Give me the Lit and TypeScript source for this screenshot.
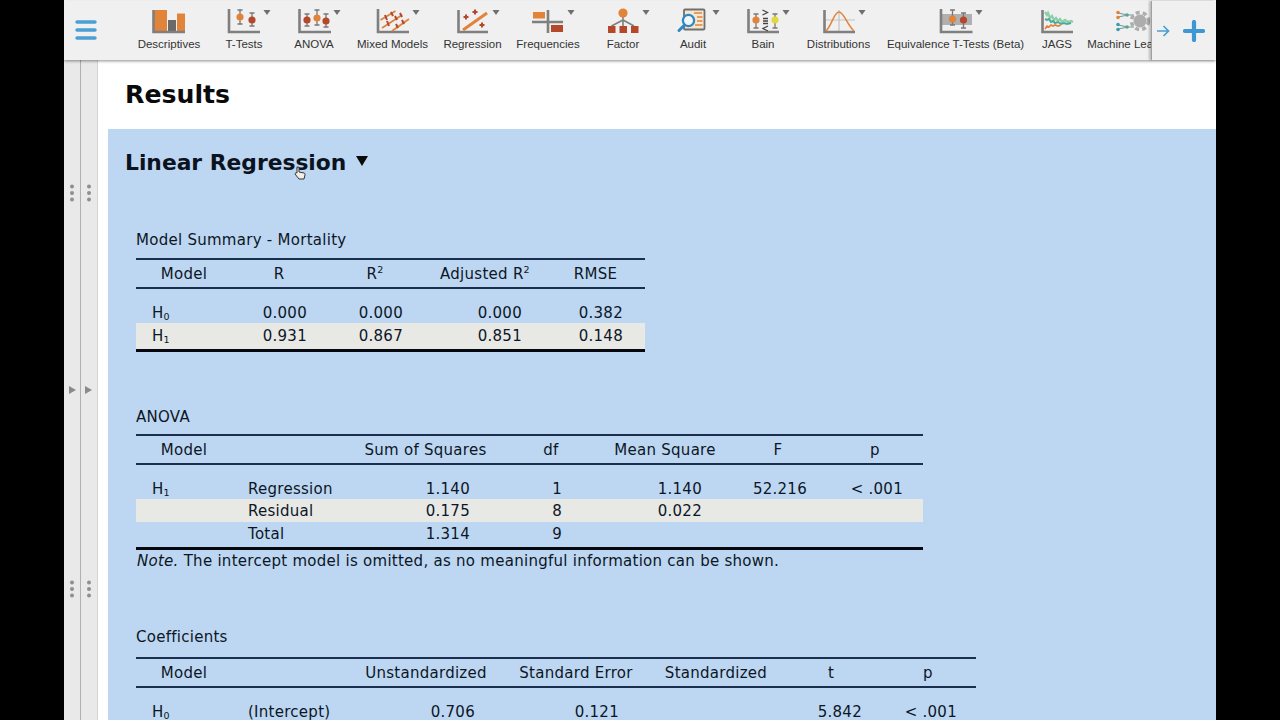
import { LitElement, html, css, svg, nothing } from "lit";
import { customElement } from "lit/decorators.js";

const G = "#7f7f7f";
const O = "#e2833a";
const R = "#b5472b";
const axes = (l: number, r: number, t = 9) => svg`<path d="M${l} ${t}V32H${r}" fill="none" stroke="${G}" stroke-width="2.6"/>`;
const tri = svg`<path d="M19.500 10h7l-3.500 5z" fill="#6f6f6f"/>`;
const ball = (x: number, y: number, top: number, bot: number, c: string) => svg`
  <path d="M${x - 2.5} ${top}h5M${x - 2.5} ${bot}h5M${x} ${top}V${bot}" stroke="#777" stroke-width="1.3" fill="none"/>
  <circle cx="${x}" cy="${y}" r="3.6" fill="${c}"/>`;
const plus = (x: number, y: number) => svg`<path d="M${x - 2.5} ${y}h5M${x} ${y - 2.5}v5" stroke="${R}" stroke-width="2"/>`;

const icons: Record<string, unknown> = {
  desc: svg`<rect x="-16" y="10" width="14" height="22" fill="${O}"/><rect x="-1" y="20" width="8" height="12" fill="#6a6a6a"/><rect x="8" y="13.500" width="8" height="18.500" fill="${O}"/>${axes(-15.5, 16, 10)}`,
  ttest: svg`${axes(-15, 16)}${ball(-4, 17, 10, 24, O)}${ball(8, 20, 13, 26, R)}${tri}`,
  anova: svg`${axes(-14.5, 17)}${ball(-7, 20, 14, 26, R)}${ball(3, 18, 10, 25, O)}${ball(12, 21, 14, 27, R)}${tri}`,
  mixed: svg`${axes(-15, 16)}
    <path d="M-12.500 20L2.500 11M-11 28L9 15M-1 31L16 19" stroke="${O}" stroke-width="1.800" fill="none"/>
    <path d="M-8 15l2 5M-2 12l2 4M-6 21l2 5M2 16l2 4M7 13l2 4M3 24l2 4M9 20l2 4" stroke="${R}" stroke-width="2"/>${tri}`,
  reg: svg`${axes(-14.5, 15, 10)}<path d="M-10 30L14 13" stroke="${O}" stroke-width="3"/>${plus(2, 12)}${plus(-7, 17)}${plus(9, 25)}${tri}`,
  freq: svg`<rect x="-15" y="12" width="12" height="6.500" fill="${O}"/><rect x="3" y="25" width="12" height="7" fill="${R}"/><path d="M0 10V33M-16 22H15" stroke="${G}" stroke-width="2.600"/>${tri}`,
  factor: svg`<path d="M0 17V26M0 20L-11.500 26M0 20L11 26" stroke="${G}" stroke-width="1.600" fill="none"/><circle cx="0" cy="13" r="4.600" fill="${O}"/><rect x="-15" y="26" width="7.500" height="7" fill="${R}"/><rect x="-3.500" y="26" width="7.500" height="7" fill="${R}"/><rect x="8" y="26" width="7.500" height="7" fill="${R}"/>${tri}`,
  audit: svg`<rect x="-9" y="9.500" width="20.500" height="20" rx="1" fill="#f4e6d0" stroke="#6f6f6f" stroke-width="1.800"/>
    <path d="M1 13h8M4 17h5.500M4 21h5.500M2 25h7.500" stroke="${O}" stroke-width="1.500"/>
    <circle cx="-4.500" cy="20.500" r="5.600" fill="#f1f6fa" stroke="#2f8ac4" stroke-width="2.300"/><path d="M-8.500 25L-14 30.500" stroke="#2f8ac4" stroke-width="3" stroke-linecap="round"/>${tri}`,
  bain: svg`${axes(-14.5, 16)}${ball(-7, 20, 14, 28, O)}${ball(12, 20, 14, 28, "#e0d83c")}
    <path d="M-.500 10l5 2.500-5 2.500M0 18.500h5M0 21h5M0 23.500h5M5 26l-5 2.500 5 2.500" stroke="#444" stroke-width="1.300" fill="none"/>${tri}`,
  dist: svg`<path d="M0 10V32M-15 20H16" stroke="#c4c4c4" stroke-width="1.200"/>${axes(-14.5, 16, 10)}<path d="M-13 31C-7 25-5 12 0 12S8 25 15 31" fill="none" stroke="${O}" stroke-width="1.500"/>${tri}`,
  equiv: svg`<rect x="-15" y="14" width="31" height="11" fill="#b0b0b0"/>${axes(-15, 16.5)}${ball(-3.5, 19, 10, 25, O)}${ball(7.5, 20, 13, 28, R)}${tri}`,
  jags: svg`${axes(-14.5, 16, 10)}
    <path d="M-12 12l2 3 1-2 2 5 2-2 2 4 2-2 2 3 2-2 2 3 3-2 3 2 3-1 2 1" fill="none" stroke="#8dcfa8" stroke-width="2.300"/>
    <path d="M-12 19l2 1 2-1 2 3 2-1 2 2 3-1 3 2 3-1 3 1 4-1" fill="none" stroke="#4cab98" stroke-width="2"/>
    <path d="M-12 29l2-3 2 1 2-2 2 1 2-1 3 1 3-1" fill="none" stroke="${O}" stroke-width="1.700"/>`,
  ml: svg`<path d="M-15 13L-5 15M-15 17L-5 15M-15 25L-5 27M-15 29L-5 27M-5 15H1M-5 27H1" stroke="#6f9a9e" stroke-width="1.100"/>
    <circle cx="-15" cy="12.500" r="1.800" fill="${O}"/><circle cx="-15" cy="17.500" r="1.800" fill="${O}"/><circle cx="-6" cy="15" r="1.800" fill="#5aa58c"/>
    <circle cx="-15" cy="24.500" r="1.800" fill="#3d9bb0"/><circle cx="-15" cy="29.500" r="1.800" fill="#3d9bb0"/><circle cx="-6" cy="27" r="1.800" fill="#5aa58c"/>
    <circle cx="7" cy="21" r="6.500" fill="#adadad"/><circle cx="7" cy="21" r="8.500" fill="none" stroke="#adadad" stroke-width="3.500" stroke-dasharray="4 3.100"/>`,
};

const tools = [
  ["Descriptives", "desc", 80], ["T-Tests", "ttest", 70], ["ANOVA", "anova", 70],
  ["Mixed Models", "mixed", 87], ["Regression", "reg", 73], ["Frequencies", "freq", 78],
  ["Factor", "factor", 72], ["Audit", "audit", 68], ["Bain", "bain", 72],
  ["Distributions", "dist", 79], ["Equivalence T-Tests (Beta)", "equiv", 155], ["JAGS", "jags", 48],
  ["Machine Learning", "ml", 104],
] as [string, string, number][];

const H0 = html`H<sub>0</sub>`;
const H1 = html`H<sub>1</sub>`;
const R2 = html`R<sup>2</sup>`;
const ADJ = html`Adjusted R<sup>2</sup>`;

interface Tbl {
  title: string;
  kind: string;
  cols: [number, number][];
  head: unknown[];
  rows: unknown[][];
  hl: number;
  note?: boolean;
}

const tables: Tbl[] = [
  {
    title: "Model Summary - Mortality", kind: "summary",
    cols: [[96, 0], [94, 19], [98, 21], [122, 24], [99, 22]],
    head: ["Model", "R", R2, ADJ, "RMSE"],
    rows: [[H0, "0.000", "0.000", "0.000", "0.382"], [H1, "0.931", "0.867", "0.851", "0.148"]],
    hl: 1,
  },
  {
    title: "ANOVA", kind: "anova",
    cols: [[96, 0], [118, 0], [151, 31], [100, 39], [128, 27], [98, 20], [96, 20]],
    head: ["Model", "", "Sum of Squares", "df", "Mean Square", "F", "p"],
    rows: [
      [H1, "Regression", "1.140", "1", "1.140", "52.216", "< .001"],
      ["", "Residual", "0.175", "8", "0.022", "", ""],
      ["", "Total", "1.314", "9", "", "", ""],
    ],
    hl: 1, note: true,
  },
  {
    title: "Coefficients", kind: "coef",
    cols: [[96, 0], [118, 0], [152, 27], [148, 31], [132, 0], [98, 18], [96, 19]],
    head: ["Model", "", "Unstandardized", "Standard Error", "Standardized", "t", "p"],
    rows: [[H0, "(Intercept)", "0.706", "0.121", "", "5.842", "< .001"]],
    hl: -1,
  },
];

const grip = html`<svg class="grip" viewBox="0 0 6 18"><circle cx="3" cy="2.5" r="2"/><circle cx="3" cy="9" r="2"/><circle cx="3" cy="15.5" r="2"/></svg>`;

@customElement("app-root")
export class AppRoot extends LitElement {
  static styles = css`
    :host { display: block; width: 1280px; height: 720px; background: #000; overflow: hidden; font-family: "DejaVu Sans", sans-serif; }
    .frame { width: 1152px; height: 720px; margin-left: 64px; display: flex; flex-direction: column; background: #fff; overflow: hidden; }
    .toolbar { flex: none; height: 59px; margin-top: 1px; background: #f0f0f0; display: flex; box-shadow: 0 1px 3px rgba(0,0,0,.45); position: relative; z-index: 2; }
    .menu { flex: none; width: 65px; display: flex; align-items: center; justify-content: center; }
    .menu svg { width: 22px; height: 20px; margin-left: -22px; margin-top: -1px; }
    .tools { flex: none; width: 1022px; display: flex; overflow: hidden; }
    .tool { flex: none; display: flex; flex-direction: column; align-items: center; font: 11.5px/14px "Liberation Sans", Arial, sans-serif; color: #333; white-space: nowrap; }
    .tool svg { flex: none; width: 56px; height: 30px; margin-top: 4px; overflow: visible; }
    .tool span { margin-top: 2px; }
    .side { flex: none; width: 65px; display: flex; align-items: center; gap: 13px; padding-left: 4px; box-sizing: border-box; border-left: 1px solid #a0a0a0; box-shadow: -2px 0 2px rgba(0,0,0,.22); background: #f0f0f0; }
    .side .arrow { width: 14px; height: 14px; flex: none; }
    .side .add { width: 22px; height: 22px; flex: none; }
    .body { flex: 1; min-height: 0; display: flex; }
    .panel { flex: none; width: 16px; background: #e9e9e9; border-right: 1px solid #b0b0b0; display: flex; flex-direction: column; align-items: center; }
    .panel.second { border-right: 1px solid #d4d4d4; padding-right: 1px; width: 15px; }
    .grip { width: 6px; height: 18px; fill: #8f8f8f; flex: none; }
    .panel > .grip:first-child { margin-top: 124px; }
    .panel .mid { width: 7px; height: 8px; fill: #8a8a8a; margin-top: 184px; flex: none; }
    .panel .mid + .grip { margin-top: 186px; }
    .main { flex: 1; min-width: 0; padding-left: 10px; display: flex; flex-direction: column; }
    .results { flex: none; height: 69px; margin: 0; padding-left: 17px; box-sizing: border-box; font-size: 25.2px; line-height: 69px; font-weight: 700; color: #0a0a0a; }
    .analysis { flex: 1; background: #bdd6f1; padding: 14px 0 0 28px; position: relative; color: #0c1626; }
    h2 { margin: 0 0 47px -11px; font-size: 21.8px; line-height: 40px; font-weight: 700; display: flex; align-items: center; gap: 10px; color: #0b1220; }
    h2 svg { width: 12px; height: 10px; margin-top: -5px; }
    .ttl { font-size: 15px; letter-spacing: .27px; line-height: 20px; margin-bottom: 8px; }
    .anova .ttl { margin-bottom: 7px; }
    .coef .ttl { margin-bottom: 10px; }
    .sec { margin-bottom: 55px; }
    table { border-collapse: separate; border-spacing: 0; table-layout: fixed; font-size: 15px; letter-spacing: .27px; border-top: 2px solid #1a2e4e; }
    th { font-weight: 400; height: 26px; padding: 1px 0 0; text-align: center; border-bottom: 2px solid #1a2e4e; white-space: nowrap; }
    td { height: 20.5px; padding: 2px 0 0; text-align: right; white-space: nowrap; line-height: 20.5px; }
    td.term { text-align: left; padding-left: 16px; }
    .gap td { height: 12px; padding: 0; }
    tr.hl td { background: #e8e8e5; }
    .summary tr.hl td { height: 23px; vertical-align: top; box-shadow: 0 -1px 0 #e8e8e5; }
    .end { height: 3px; background: #05080f; }
    .anova .end { margin-top: 3px; }
    .note { font-size: 15px; letter-spacing: .27px; line-height: 22px; padding-left: 1px; }
    sub, sup { font-size: 9.5px; line-height: 0; }
    sub { vertical-align: -2px; }
    .hand { position: absolute; left: 186px; top: 37px; width: 12px; height: 14px; }
  `;

  private table(t: Tbl) {
    return html`<section class="sec ${t.kind}">
      <div class="ttl">${t.title}</div>
      <table>
        <colgroup>${t.cols.map((c) => html`<col style="width:${c[0]}px" />`)}</colgroup>
        <thead><tr>${t.head.map((h) => html`<th>${h}</th>`)}</tr></thead>
        <tbody>
          <tr class="gap"><td colspan="${t.cols.length}"></td></tr>
          ${t.rows.map((r, ri) => html`<tr class=${ri === t.hl ? "hl" : ""}>
            ${r.map((c, i) => i === 0 || (i === 1 && t.kind !== "summary")
              ? html`<td class="term">${c}</td>`
              : html`<td style="padding-right:${t.cols[i][1]}px">${c}</td>`)}
          </tr>`)}
        </tbody>
      </table>
      <div class="end" style="width:${t.cols.reduce((a, c) => a + c[0], 0)}px"></div>
      ${t.note ? html`<div class="note"><i>Note.</i> The intercept model is omitted, as no meaningful information can be shown.</div>` : nothing}
    </section>`;
  }

  render() {
    return html`<div class="frame">
      <header class="toolbar">
        <div class="menu"><svg viewBox="0 0 22 20"><path d="M2 2h18M2 10h18M2 18h18" stroke="#4a9fd4" stroke-width="3.400" stroke-linecap="round"/></svg></div>
        <div class="tools">
          ${tools.map(([label, ic, w]) => html`<div class="tool" style="width:${w}px">
            <svg viewBox="-28 5 56 30">${icons[ic]}</svg><span>${label}</span></div>`)}
        </div>
        <div class="side">
          <svg class="arrow" viewBox="0 0 14 14"><path d="M1 7h11M7.500 2l5 5-5 5" fill="none" stroke="#4a9fd4" stroke-width="1.700"/></svg>
          <svg class="add" viewBox="0 0 22 22"><path d="M11 2v18M2 11h18" stroke="#3d97d3" stroke-width="4.200" stroke-linecap="round"/></svg>
        </div>
      </header>
      <div class="body">
        <div class="panel">${grip}<svg class="mid" viewBox="0 0 7 8"><path d="M0 0l7 4-7 4z"/></svg>${grip}</div>
        <div class="panel second">${grip}<svg class="mid" viewBox="0 0 7 8"><path d="M0 0l7 4-7 4z"/></svg>${grip}</div>
        <main class="main">
          <h1 class="results">Results</h1>
          <div class="analysis">
            <h2>Linear Regression <svg viewBox="0 0 12 10"><path d="M0 0h12L6 10z" fill="#0a0a0a"/></svg></h2>
            ${tables.map((t) => this.table(t))}
            <svg class="hand" viewBox="0 0 12 14"><path d="M3 7V2a1 1 0 012 0v4l5 1c1 .3 1 1 1 2l-1 4H5L1 8c0-1 1-1.500 2-1z" fill="#f3efe6" stroke="#333" stroke-width="1"/></svg>
          </div>
        </main>
      </div>
    </div>`;
  }
}
